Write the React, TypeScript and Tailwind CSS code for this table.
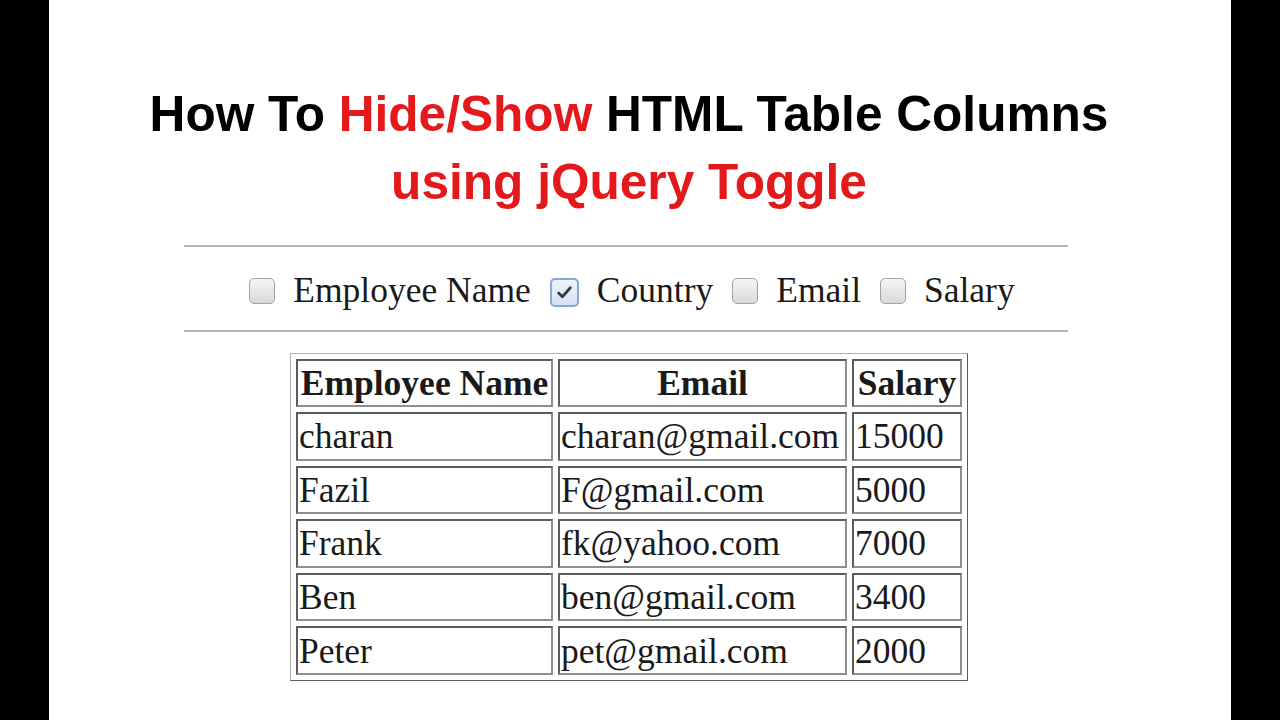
import React from "react";

type Employee = { name: string; email: string; salary: string };

const EMPLOYEES: Employee[] = [
    { name: "charan", email: "charan@gmail.com", salary: "15000" },
    { name: "Fazil", email: "F@gmail.com", salary: "5000" },
    { name: "Frank", email: "fk@yahoo.com", salary: "7000" },
    { name: "Ben", email: "ben@gmail.com", salary: "3400" },
    { name: "Peter", email: "pet@gmail.com", salary: "2000" },
];

const TOGGLES = [
    { label: "Employee Name", checked: false },
    { label: "Country", checked: true },
    { label: "Email", checked: false },
    { label: "Salary", checked: false },
];

const SANS = "font-['Liberation_Sans',Arial,sans-serif]";
const SERIF = "font-['Liberation_Serif','Times_New_Roman',serif]";
const CELL =
    "border-2 border-t-[#5c5c5c] border-l-[#5c5c5c] border-r-[#8e8e8e] border-b-[#8e8e8e] px-px py-0 align-middle leading-[40px]";

function Checkbox({ checked }: { checked: boolean }) {
    if (checked) {
        return (
            <span className="mt-[8px] flex h-[29px] w-[29px] shrink-0 items-center justify-center rounded-[5px] border-2 border-[#86a9d8] bg-gradient-to-b from-[#eef3fb] to-[#d5e0f0]">
                <svg viewBox="0 0 16 16" className="h-[17px] w-[17px]">
                    <path d="M2.5 8.5 L6 12 L13.5 3.5" fill="none" stroke="#3a3a3a" strokeWidth="2.6" strokeLinecap="round" strokeLinejoin="round" />
                </svg>
            </span>
        );
    }
    return (
        <span className="mt-[8px] block h-[26px] w-[26px] shrink-0 rounded-[5px] border border-[#a3a3a3] bg-gradient-to-b from-[#f5f5f5] to-[#d9d9d9]" />
    );
}

export default function App() {
    return (
        <div className="flex h-[720px] w-[1280px] overflow-hidden bg-black">
            <div className="w-[49px] shrink-0 bg-black" />

            <div className="flex w-[1182px] shrink-0 flex-col items-center bg-white pr-[22px]">
                {/* title */}
                <div className={`${SANS} pt-[80px] text-center text-[49.6px] font-bold leading-[68px] text-black`}>
                    <div>
                        How To <span className="text-[#e3191c]">Hide/Show</span> HTML Table Columns
                    </div>
                    <div className="text-[#e3191c]">using jQuery Toggle</div>
                </div>

                <div className="mr-[6px] mt-[29px] h-[2px] w-[884px] bg-[#b4b4b4]" />

                {/* column toggles */}
                <div className={`${SERIF} ml-[6px] flex h-[83px] items-start gap-[19px] pt-[23px] text-[35.5px] leading-[40px] text-[#1a1a1a]`}>
                    {TOGGLES.map(t => (
                        <label key={t.label} className="flex items-start gap-[18px]">
                            <Checkbox checked={t.checked} />
                            <span>{t.label}</span>
                        </label>
                    ))}
                </div>

                <div className="mr-[6px] h-[2px] w-[884px] bg-[#b4b4b4]" />

                {/* table */}
                <table
                    className={`${SERIF} mt-[21px] table-fixed border-separate border-spacing-[5px] border border-t-[#b0b0b0] border-l-[#b0b0b0] border-r-[#5a5a5a] border-b-[#5a5a5a] text-[35.5px] text-[#1a1a1a]`}
                >
                    <thead>
                        <tr>
                            <th className={`${CELL} h-[48px] w-[257px] text-center font-bold`}>Employee Name</th>
                            <th className={`${CELL} h-[48px] w-[289px] text-center font-bold`}>Email</th>
                            <th className={`${CELL} h-[48px] w-[110px] text-center font-bold`}>Salary</th>
                        </tr>
                    </thead>
                    <tbody>
                        {EMPLOYEES.map(e => (
                            <tr key={e.name}>
                                <td className={`${CELL} h-[48.6px] text-left`}>{e.name}</td>
                                <td className={`${CELL} h-[48.6px] text-left`}>{e.email}</td>
                                <td className={`${CELL} h-[48.6px] text-left`}>{e.salary}</td>
                            </tr>
                        ))}
                    </tbody>
                </table>
            </div>

            <div className="w-[49px] shrink-0 bg-black" />
        </div>
    );
}
